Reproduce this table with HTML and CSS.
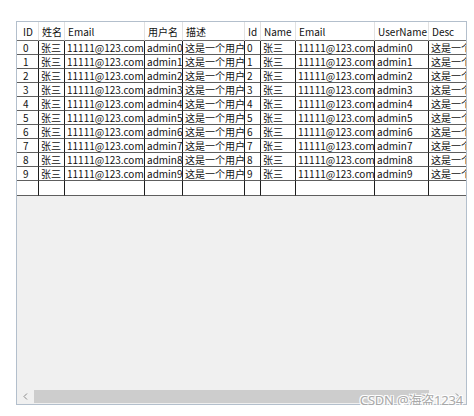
FILE: index.html
```html
<!DOCTYPE html>
<html>
<head>
<meta charset="utf-8">
<link rel="stylesheet" href="styles.css">
</head>
<body>
<div class="grid">
  <div class="viewport">
    <table class="data">
      <colgroup>
        <col class="c1"><col class="c2"><col class="c3"><col class="c4"><col class="c5">
        <col class="c6"><col class="c7"><col class="c8"><col class="c9"><col class="c10">
      </colgroup>
      <thead>
        <tr><th class="first">ID</th><th>姓名</th><th>Email</th><th>用户名</th><th>描述</th><th>Id</th><th>Name</th><th>Email</th><th>UserName</th><th>Desc</th></tr>
      </thead>
      <tbody>
        <tr><td class="first">0</td><td>张三</td><td>11111@123.com</td><td>admin0</td><td>这是一个用户</td><td>0</td><td>张三</td><td>11111@123.com</td><td>admin0</td><td>这是一个用户</td></tr>
        <tr><td class="first">1</td><td>张三</td><td>11111@123.com</td><td>admin1</td><td>这是一个用户</td><td>1</td><td>张三</td><td>11111@123.com</td><td>admin1</td><td>这是一个用户</td></tr>
        <tr><td class="first">2</td><td>张三</td><td>11111@123.com</td><td>admin2</td><td>这是一个用户</td><td>2</td><td>张三</td><td>11111@123.com</td><td>admin2</td><td>这是一个用户</td></tr>
        <tr><td class="first">3</td><td>张三</td><td>11111@123.com</td><td>admin3</td><td>这是一个用户</td><td>3</td><td>张三</td><td>11111@123.com</td><td>admin3</td><td>这是一个用户</td></tr>
        <tr><td class="first">4</td><td>张三</td><td>11111@123.com</td><td>admin4</td><td>这是一个用户</td><td>4</td><td>张三</td><td>11111@123.com</td><td>admin4</td><td>这是一个用户</td></tr>
        <tr><td class="first">5</td><td>张三</td><td>11111@123.com</td><td>admin5</td><td>这是一个用户</td><td>5</td><td>张三</td><td>11111@123.com</td><td>admin5</td><td>这是一个用户</td></tr>
        <tr><td class="first">6</td><td>张三</td><td>11111@123.com</td><td>admin6</td><td>这是一个用户</td><td>6</td><td>张三</td><td>11111@123.com</td><td>admin6</td><td>这是一个用户</td></tr>
        <tr><td class="first">7</td><td>张三</td><td>11111@123.com</td><td>admin7</td><td>这是一个用户</td><td>7</td><td>张三</td><td>11111@123.com</td><td>admin7</td><td>这是一个用户</td></tr>
        <tr><td class="first">8</td><td>张三</td><td>11111@123.com</td><td>admin8</td><td>这是一个用户</td><td>8</td><td>张三</td><td>11111@123.com</td><td>admin8</td><td>这是一个用户</td></tr>
        <tr><td class="first">9</td><td>张三</td><td>11111@123.com</td><td>admin9</td><td>这是一个用户</td><td>9</td><td>张三</td><td>11111@123.com</td><td>admin9</td><td>这是一个用户</td></tr>
        <tr class="empty"><td class="first"></td><td></td><td></td><td></td><td></td><td></td><td></td><td></td><td></td><td></td></tr>
      </tbody>
    </table>
  </div>
  <div class="hscroll">
    <div class="arrow"><svg width="5" height="7" viewBox="0 0 5 7"><path d="M4 0.5 L1 3.5 L4 6.5" fill="none" stroke="#8a8a8a" stroke-width="1"/></svg></div>
    <div class="track"><div class="thumb"></div></div>
    <div class="arrow"><svg width="5" height="7" viewBox="0 0 5 7"><path d="M1 0.5 L4 3.5 L1 6.5" fill="none" stroke="#8a8a8a" stroke-width="1"/></svg></div>
  </div>
  <div class="watermark">CSDN @海盗1234</div>
</div>
</body>
</html>
```

FILE: styles.css
```css
html, body {
  margin: 0;
  padding: 0;
  background: #ffffff;
}
body {
  padding: 21px 0 0 16px;
  font-family: "Noto Sans CJK SC", "Noto Sans", sans-serif;
  font-size: 10px;
  color: #111;
}
.grid {
  position: relative;
  width: 451px;
  height: 384px;
  box-sizing: border-box;
  border: 1px solid #b3bfcc;
  display: flex;
  flex-direction: column;
  background: #f0f0f0;
}
.viewport {
  flex: 1;
  overflow: hidden;
}
.data {
  table-layout: fixed;
  width: 472px;
  border-collapse: separate;
  border-spacing: 0;
  background: #fff;
}
.c1 { width: 22px; }
.c2 { width: 26px; }
.c3 { width: 80px; }
.c4 { width: 38px; }
.c5 { width: 62px; }
.c6 { width: 16px; }
.c7 { width: 35px; }
.c8 { width: 79px; }
.c9 { width: 54px; }
.c10 { width: 60px; }
.data th, .data td {
  white-space: nowrap;
  overflow: hidden;
  text-align: left;
  font-weight: normal;
  box-sizing: border-box;
  line-height: 13px;
}
.data th {
  height: 19px;
  padding: 0 0 0 3px;
  border-right: 1px solid #e2e2e2;
  border-bottom: 1px solid #6a6a6a;
}
.data td {
  height: 14px;
  padding: 0 0 0 2px;
  border-right: 1px solid #1e1e1e;
  border-bottom: 1px solid #5e5e5e;
}
.data .first {
  padding-left: 6px;
}
.data .empty td {
  height: 15px;
}
.hscroll {
  height: 15px;
  display: flex;
  align-items: stretch;
  background: #f0f0f0;
}
.arrow {
  width: 17px;
  display: flex;
  align-items: center;
  justify-content: center;
}
.track {
  flex: 1;
  display: flex;
  align-items: center;
  padding-right: 20px;
}
.thumb {
  flex: 1;
  height: 13px;
  background: #cdcdcd;
}
.watermark {
  position: absolute;
  right: 3px;
  bottom: -5px;
  font-family: "Noto Sans", "Noto Sans CJK SC", sans-serif;
  font-size: 13px;
  color: #a8a8a8;
  text-shadow: 1px 1px 0 #fff, -1px -1px 0 #fff, 1px -1px 0 #fff, -1px 1px 0 #fff;
  letter-spacing: -0.2px;
}
```
